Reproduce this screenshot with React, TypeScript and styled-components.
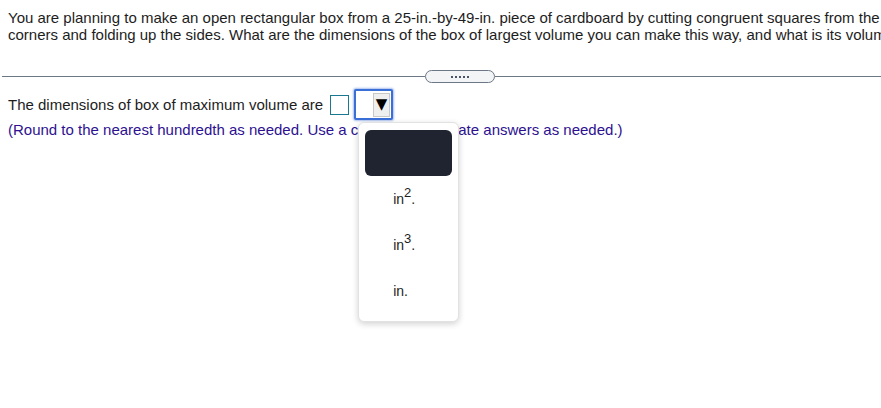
import React from "react";
import styled, { createGlobalStyle } from "styled-components";

const Global = createGlobalStyle`
  html, body { margin: 0; padding: 0; background: #fff; overflow: hidden; }
  body { font-family: "Liberation Sans", Arial, sans-serif; }
`;

const Page = styled.div`
  width: 881px;
  height: 408px;
  overflow: hidden;
  position: relative;
`;

const Question = styled.div`
  padding: 9px 0 0 8px;
  font-size: 15px;
  line-height: 17px;
  color: #1d1d1d;
`;

const Line = styled.div`
  white-space: nowrap;
`;

const Divider = styled.div`
  display: flex;
  align-items: center;
  margin: 27px 0 0 2px;
  height: 13px;
`;

const Rule = styled.div<{ $grow?: boolean }>`
  height: 1px;
  background: #6b7785;
  flex: ${(p) => (p.$grow ? "1" : "0 0 423px")};
`;

const Pill = styled.div`
  width: 68px;
  height: 11px;
  border: 1px solid #6b7785;
  border-radius: 7px;
  background: #f3f4f6;
  display: flex;
  align-items: center;
  justify-content: center;
  gap: 2px;
`;

const Dot = styled.span`
  width: 2px;
  height: 2px;
  background: #4b5563;
`;

const Answer = styled.div`
  padding: 6px 0 0 8px;
  font-size: 15px;
  color: #1d1d1d;
  display: flex;
  align-items: center;
  white-space: nowrap;
`;

const Blank = styled.div`
  width: 17px;
  height: 18px;
  border: 1px solid #1b7891;
  margin-left: 7px;
`;

const SelectWrap = styled.div`
  position: relative;
  margin-left: 5px;
`;

const Select = styled.div`
  width: 34px;
  height: 27px;
  border: 2px solid #3b6fd8;
  box-shadow: 0 0 2px 1px rgba(59, 111, 216, 0.45);
  border-radius: 2px;
  background: #fff;
  display: flex;
  align-items: center;
  justify-content: flex-end;
  padding-right: 1px;
`;

const ArrowBtn = styled.div`
  width: 15px;
  height: 22px;
  background: #efefef;
  border: 1px solid #c8c8c8;
  display: flex;
  align-items: center;
  justify-content: center;
  font-size: 15px;
  color: #000;
  line-height: 1;
  font-family: "DejaVu Sans", sans-serif;
`;

const Menu = styled.div`
  position: absolute;
  top: 33px;
  left: 4px;
  width: 101px;
  height: 200px;
  background: #fff;
  border: 1px solid #e2e2e2;
  border-radius: 6px;
  box-shadow: 0 2px 6px rgba(0, 0, 0, 0.18);
  box-sizing: border-box;
  padding: 7px 6px 0 6px;
  display: flex;
  flex-direction: column;
  align-items: stretch;
  z-index: 5;
`;

const Highlight = styled.div`
  height: 46px;
  background: #1f2430;
  border-radius: 6px;
`;

const Option = styled.div`
  height: 46px;
  display: flex;
  align-items: center;
  padding-left: 28px;
  font-size: 14px;
  color: #1d1d1d;
`;

const Label = styled.span`
  line-height: 1;
`;

const Sup = styled.sup`
  font-size: 13px;
  vertical-align: 7px;
  line-height: 0;
`;

const Hint = styled.div`
  padding: 1px 0 0 8px;
  font-size: 15px;
  color: #2d1191;
  white-space: nowrap;
`;

export default function App() {
  return (
    <Page>
      <Global />
      <Question>
        <Line>
          You are planning to make an open rectangular box from a 25-in.-by-49-in. piece of cardboard by cutting congruent squares from the
        </Line>
        <Line>
          corners and folding up the sides. What are the dimensions of the box of largest volume you can make this way, and what is its volume?
        </Line>
      </Question>
      <Divider>
        <Rule />
        <Pill>
          <Dot />
          <Dot />
          <Dot />
          <Dot />
          <Dot />
        </Pill>
        <Rule $grow />
      </Divider>
      <Answer>
        The dimensions of box of maximum volume are
        <Blank />
        <SelectWrap>
          <Select>
            <ArrowBtn>▼</ArrowBtn>
          </Select>
          <Menu>
            <Highlight />
            <Option>
              <Label>
                in<Sup>2</Sup>.
              </Label>
            </Option>
            <Option>
              <Label>
                in<Sup>3</Sup>.
              </Label>
            </Option>
            <Option>
              <Label>in.</Label>
            </Option>
          </Menu>
        </SelectWrap>
      </Answer>
      <Hint>
        (Round to the nearest hundredth as needed. Use a comma to separate answers as needed.)
      </Hint>
    </Page>
  );
}
